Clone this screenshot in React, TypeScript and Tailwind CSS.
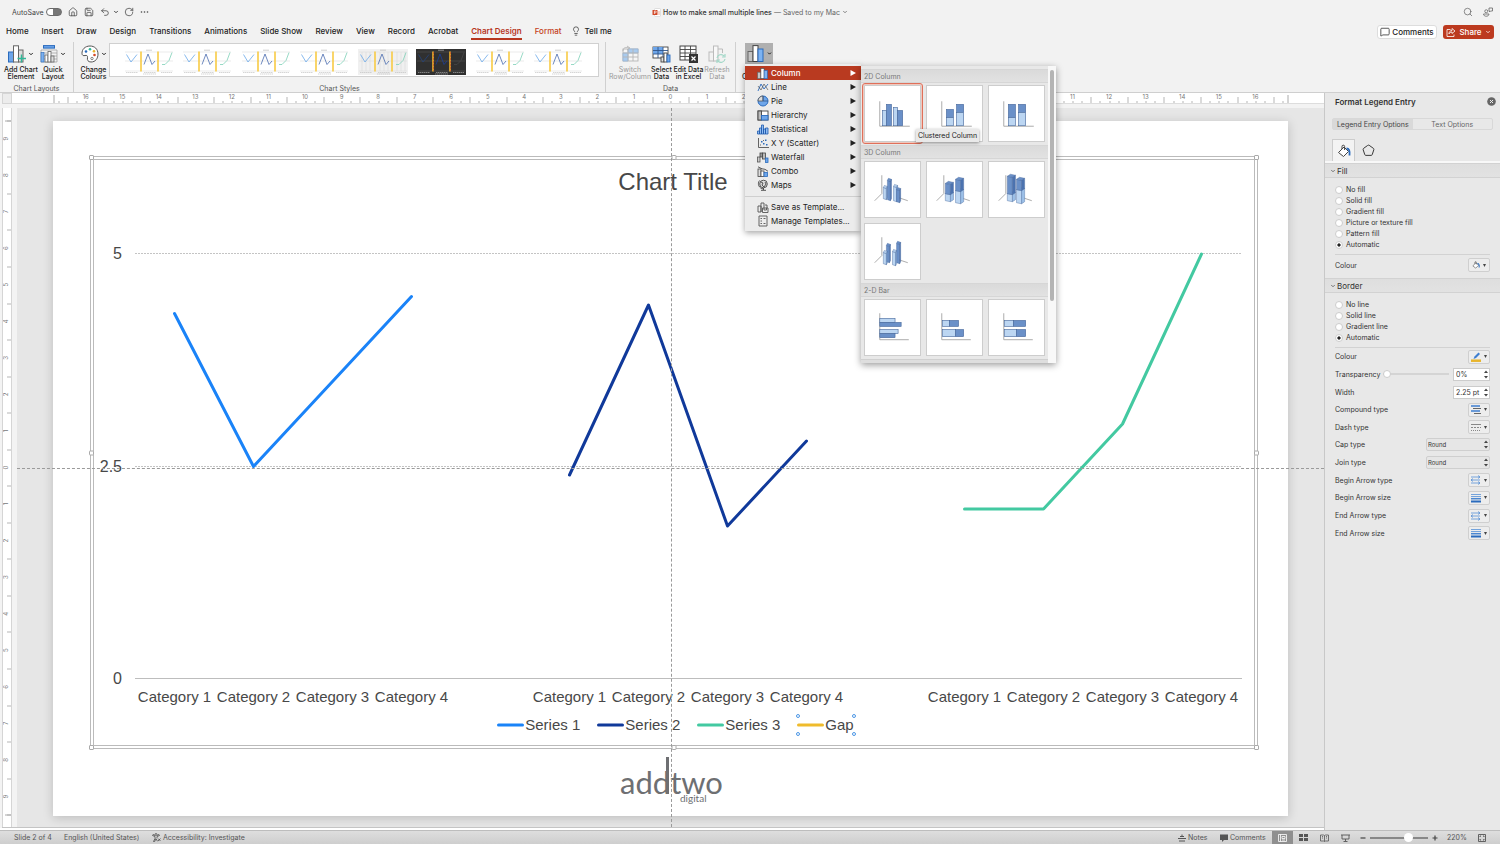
import type { ReactNode } from "react";
import {
  ChevronDown,
  Home,
  Lightbulb,
  MessageSquare,
  Pentagon,
  Save,
  Search,
  Undo2,
  RotateCw,
} from "lucide-react";

const BLUE = "#6a90c8";
const PALE = "#bcd6f2";

const SERIES = [
  { name: "Series 1", color: "#1a83f8", start: 0, values: [4.3, 2.5, 3.5, 4.5] },
  { name: "Series 2", color: "#10399a", start: 5, values: [2.4, 4.4, 1.8, 2.8] },
  { name: "Series 3", color: "#43c9a1", start: 10, values: [2, 2, 3, 5] },
];

const TABS = [
  "Home",
  "Insert",
  "Draw",
  "Design",
  "Transitions",
  "Animations",
  "Slide Show",
  "Review",
  "View",
  "Record",
  "Acrobat",
];

/* ---------- title bar and tabs ---------- */

const TitleBar = () => (
  <div className="grid h-6 shrink-0 grid-cols-[1fr_auto_1fr] items-center text-[7px] text-[#444]">
    <div className="flex items-center pl-3">
      <label htmlFor="autosave" className="w-[34px]">
        AutoSave
      </label>
      <input
        id="autosave"
        type="checkbox"
        role="switch"
        className="h-2 w-[16px] appearance-none rounded-full border border-[#6b6b6b] bg-[linear-gradient(90deg,#fff_45%,#777_45%)]"
      />
      <button aria-label="Home" className="ml-[6px]">
        <Home size={10} strokeWidth={1.8} />
      </button>
      <button aria-label="Save" className="ml-[6px]">
        <Save size={10} strokeWidth={1.8} />
      </button>
      <button aria-label="Undo" className="ml-[6px]">
        <Undo2 size={10} strokeWidth={1.8} />
      </button>
      <button aria-label="Undo list" className="ml-[3px]">
        <ChevronDown size={6} strokeWidth={4} />
      </button>
      <button aria-label="Redo" className="ml-[5px]">
        <RotateCw size={10} strokeWidth={1.8} />
      </button>
      <button aria-label="More" className="ml-[6px]">
        <svg width="9" height="4" viewBox="0 0 9 4" fill="#444">
          <circle cx="1.5" cy="2" r="0.8" />
          <circle cx="4.5" cy="2" r="0.8" />
          <circle cx="7.5" cy="2" r="0.8" />
        </svg>
      </button>
    </div>
    <button className="flex items-center gap-[2px]">
      <svg width="9" height="9" viewBox="0 0 9 9">
        <rect x="2.5" y="0.5" width="6" height="8" rx="1" fill="#fff" stroke="#ccc" strokeWidth=".6" />
        <rect x="0.5" y="2" width="5" height="5" rx=".6" fill="#d24726" />
        <path d="M2.4 6V3h1a.9.9 0 0 1 0 1.8h-1" fill="none" stroke="#fff" strokeWidth=".7" />
        <path d="M6 4h2M6 6h2" stroke="#e78a70" strokeWidth=".7" />
      </svg>
      <span className="font-medium text-[#333]">How to make small multiple lines</span>
      <span className="text-[#666]">— Saved to my Mac</span>
      <ChevronDown size={6} strokeWidth={2.5} />
    </button>
    <div className="flex items-center justify-end gap-[10px] pr-[7px] text-[#666]">
      <button aria-label="Search">
        <Search size={10} strokeWidth={1.8} />
      </button>
      <button aria-label="Presence">
        <svg width="10" height="10" viewBox="0 0 20 20" fill="none" stroke="#666" strokeWidth="1.6">
          <circle cx="6.5" cy="8.5" r="3" />
          <path d="M1 14h11c0 6-11 6-11 0zM12 2h7v6h-4l-2 2V8h-1z" />
        </svg>
      </button>
    </div>
  </div>
);

const TabRow = () => (
  <div className="flex h-[18px] shrink-0 items-start justify-between text-[8px] font-medium text-[#222]">
    <nav className="flex h-[14px] items-center gap-[13px] pl-[6px]">
      {TABS.map((tab) => (
        <a key={tab} href="#">
          {tab}
        </a>
      ))}
      <a href="#" className="relative font-semibold text-[#b7361e]">
        Chart Design
        <span className="absolute inset-x-0 top-[11px] h-[2px] bg-[#b7361e]" />
      </a>
      <a href="#" className="text-[#c43e1c]">
        Format
      </a>
      <a href="#" className="-ml-1 flex items-center gap-[4px]">
        <Lightbulb size={10} strokeWidth={1.6} />
        Tell me
      </a>
    </nav>
    <div className="flex items-center gap-[6px] pr-[6px] pt-[1px]">
      <button className="flex h-[14px] w-[60px] items-center justify-center gap-[2px] rounded-[3px] border border-[#ddd] bg-white">
        <MessageSquare size={10} strokeWidth={1.8} />
        Comments
      </button>
      <button className="flex h-[14px] w-[51px] items-center justify-center gap-[3px] rounded-[3px] bg-[#bc3a1f] text-white">
        <svg width="10" height="9" viewBox="0 0 20 18" fill="none" stroke="currentColor" strokeWidth="1.6">
          <path d="M9 3H2v14h14v-4M12 5V1l6 5-6 5V8c-4 0-5 2-6 4 0-4 2-7 6-7z" />
        </svg>
        Share
        <ChevronDown size={6} strokeWidth={3} />
      </button>
    </div>
  </div>
);

/* ---------- ribbon ---------- */

const AddElementIcon = () => (
  <svg width="18" height="18" viewBox="0 0 18 18" strokeWidth="1">
    <rect x="0.5" y="7" width="5" height="10" fill="#6ea6ea" stroke="#2a6bbd" />
    <rect x="5.5" y="0.8" width="5" height="16.2" fill="#fff" stroke="#666" />
    <rect x="10.5" y="5" width="4.500" height="12" fill="#ddd" stroke="#666" />
    <path d="M13.500 9.500v8M9.500 13.500h8.500" stroke="#2fb898" strokeWidth="1.400" />
  </svg>
);

const QuickLayoutIcon = () => (
  <svg width="18" height="18" viewBox="0 0 18 18" strokeWidth="1" fill="none">
    <rect x="3.500" y="0.600" width="11" height="2.500" fill="#6ea6ea" stroke="#2a6bbd" />
    <path d="M1 5h16M1 8h16M1 11h16M1 14h16M1 17h16M1 5v12M17 5v12" stroke="#999" strokeWidth=".7" />
    <rect x="1" y="7.500" width="3" height="9.500" fill="#7db0ee" stroke="#2a6bbd" strokeWidth=".6" />
    <rect x="5" y="10" width="3" height="7" fill="#fff" stroke="#666" strokeWidth=".8" />
    <rect x="8" y="6.500" width="3" height="10.500" fill="#fff" stroke="#666" strokeWidth=".8" />
    <rect x="11" y="11" width="3" height="6" fill="#ddd" stroke="#666" strokeWidth=".8" />
  </svg>
);

const PaletteIcon = () => (
  <svg width="18" height="18" viewBox="0 0 18 18">
    <path
      d="M9 1C4 1 .8 4.500 1 8.500c.1 2 1.500 2.500 3 2 1.800-.5 3 .5 2.500 2.300C6 15 7 17 10 17c4.500 0 7-3.500 7-8 0-5-3.500-8-8-8z"
      fill="#fff"
      stroke="#555"
    />
    <circle cx="5" cy="6.500" r="1.300" fill="#2a6bbd" />
    <circle cx="9" cy="4.200" r="1.300" fill="#2fb898" />
    <circle cx="13" cy="6.200" r="1.300" fill="#e8b32c" />
    <circle cx="13.500" cy="10" r="1.300" fill="#d24726" />
    <circle cx="11" cy="13.500" r="1.200" fill="#fff" stroke="#555" strokeWidth=".7" />
  </svg>
);

const SwitchIcon = () => (
  <svg width="18" height="18" viewBox="0 0 18 18" fill="none" stroke="#b5b5b5" strokeWidth=".9">
    <rect x="2" y="4" width="15" height="12" fill="#f6f6f6" />
    <path d="M7 4h10v4H7zM2 8h5v8H2z" fill="#a9cbee" stroke="#9bb8d8" />
    <path d="M2 8h15M2 12h15M7 4v12M12 4v12" />
    <path d="M2 6c0-4 4-4 6-3M6 1l3 2-3 2" />
  </svg>
);

const SelectDataIcon = () => (
  <svg width="19" height="18" viewBox="0 0 19 18" strokeWidth=".9">
    <rect x="1" y="2" width="15" height="11" fill="#fff" stroke="#444" />
    <path d="M1 2h10v7H1z" fill="#6ea6ea" />
    <path d="M1 5.500h15M1 9h15M6 2v11M11 2v11" stroke="#30558a" />
    <rect x="9" y="12" width="3" height="5" fill="#ddd" stroke="#444" />
    <rect x="12" y="8" width="3" height="9" fill="#fff" stroke="#444" />
    <rect x="15" y="10" width="3" height="7" fill="#6ea6ea" stroke="#2a6bbd" />
  </svg>
);

const EditDataIcon = () => (
  <svg width="19" height="18" viewBox="0 0 19 18">
    <rect x="1" y="1" width="16" height="14" fill="#fff" stroke="#444" />
    <path d="M1 4.500h16M1 8h16M1 11.500h16M6 1v14M11.500 1v14" stroke="#444" strokeWidth=".9" />
    <rect x="10" y="9" width="9" height="9" fill="#333" />
    <path d="M12.500 11.500l4 4M16.500 11.500l-4 4" stroke="#fff" strokeWidth="1.200" />
  </svg>
);

const RefreshIcon = () => (
  <svg width="18" height="18" viewBox="0 0 18 18" fill="none" stroke="#bbb">
    <rect x="1" y="7" width="4.500" height="9" />
    <rect x="5.500" y="1" width="4.500" height="15" fill="#f8f8f8" />
    <path d="M10 4h4.500v4" />
    <path d="M9 13a4 4 0 0 1 7-2M17 9v3h-3M17 14a4 4 0 0 1-7 2M9 18v-3h3" stroke="#a3d8c8" strokeWidth="1.200" />
  </svg>
);

const ColumnsIcon = ({ size = 17 }: { size?: number }) => (
  <svg width={size} height={size} viewBox="0 0 17 17">
    <rect x="1" y="6.500" width="5" height="10" fill="#c4c4c4" stroke="#666" />
    <rect x="6" y="0.600" width="5" height="15.900" fill="#fff" stroke="#444" />
    <rect x="11" y="4" width="5" height="12.500" fill="#7db3f2" stroke="#2a6bbd" />
  </svg>
);

type ToolProps = {
  icon: ReactNode;
  lines: [string, string];
  arrow?: boolean;
  muted?: boolean;
  className: string;
};

const Tool = ({ icon, lines, arrow, muted, className }: ToolProps) => (
  <button
    className={`${className} flex shrink-0 flex-col items-center pt-[2px] text-[7px] leading-[7px] ${
      muted ? "text-[#999]" : "font-medium text-[#222]"
    }`}
  >
    <span className="flex h-[20px] items-center gap-[2px]">
      {icon}
      {arrow && <ChevronDown size={6} strokeWidth={4} />}
    </span>
    <span className="mt-[2px] whitespace-nowrap">
      {lines[0]}
      <br />
      {lines[1]}
    </span>
  </button>
);

const Group = ({ label, className, children }: { label: string; className: string; children: ReactNode }) => (
  <section className={`${className} flex shrink-0 flex-col justify-between border-r border-[#d0d0d0]`}>
    <div className="flex">{children}</div>
    <h2 className="text-center text-[7px] leading-[7px] text-[#555]">{label}</h2>
  </section>
);

const THUMBS = ["white", "white", "white", "white", "shaded", "dark", "white", "white"];

const StyleThumb = ({ kind, index }: { kind: string; index: number }) => {
  const dark = kind === "dark";
  const bg = dark ? "#303030" : kind === "shaded" ? "#f0f0f0" : "#fff";
  return (
    <button aria-label={`Chart style ${index + 1}`} className="shrink-0">
      <svg width="50" height="26" viewBox="0 0 50 26" fill="none" strokeWidth=".8">
        <rect width="50" height="26" fill={bg} />
        <path d="M1 3h48M1 12h48M1 22h48" stroke={dark ? "#555" : "#ddd"} strokeWidth=".6" />
        {kind === "shaded" && (
          <path d="M4 3v19M8 3v19M12 3v19M22 3v19M26 3v19M30 3v19M39 3v19M43 3v19M47 3v19" stroke="#d5d5d5" strokeWidth=".5" />
        )}
        <path d="M22 1.200h6" stroke="#bbb" strokeWidth=".7" />
        <path d="M2 23.500h12M20 23.500h12M37 23.500h11M19 25h13" stroke="#bbb" strokeWidth=".6" strokeDasharray="1.500 .5" />
        <path d="M17 2.500v20M34 2.500v20" stroke={dark ? "#f0b42a" : "#f8cb45"} strokeWidth="1.600" />
        {dark && <path d="M17.500 3v19M34.500 3v19" stroke="#c9432a" strokeWidth=".6" strokeDasharray="2 1" />}
        <path d="M2.500 5.500L7 13l6-7.500" stroke={dark ? "#24447c" : "#69a8ea"} />
        <path d="M20 15.500L24 5l4 10.500 3-3.500" stroke={dark ? "#1c3f9a" : "#4a6cb0"} />
        <path d="M38 15.500h3l4-4 3-8" stroke={dark ? "#474747" : "#7dd0b8"} />
      </svg>
    </button>
  );
};

const Ribbon = () => (
  <div className="relative z-20 flex h-[51px] shrink-0 border-b border-[#cfcfcf]">
    <Group label="Chart Layouts" className="w-[74px]">
      <Tool className="ml-[2px] w-[38px]" icon={<AddElementIcon />} lines={["Add Chart", "Element"]} arrow />
      <Tool className="w-[26px]" icon={<QuickLayoutIcon />} lines={["Quick", "Layout"]} arrow />
    </Group>
    <Group label="Chart Styles" className="w-[532px]">
      <Tool className="w-[35px] pl-1" icon={<PaletteIcon />} lines={["Change", "Colours"]} arrow />
      <div className="mt-[1px] flex h-[34px] w-[490px] justify-between border border-[#d0d0d0] bg-white pl-[14px] pr-[15px] pt-[3px]">
        {THUMBS.map((kind, i) => (
          <StyleThumb key={i} kind={kind} index={i} />
        ))}
      </div>
    </Group>
    <Group label="Data" className="w-[130px]">
      <Tool className="ml-[4px] w-[40px]" icon={<SwitchIcon />} lines={["Switch", "Row/Column"]} muted />
      <Tool className="w-[23px]" icon={<SelectDataIcon />} lines={["Select", "Data"]} />
      <Tool className="w-[31px]" icon={<EditDataIcon />} lines={["Edit Data", "in Excel"]} />
      <Tool className="w-[26px]" icon={<RefreshIcon />} lines={["Refresh", "Data"]} muted />
    </Group>
    <div className="relative ml-[6px] w-[36px]">
      <button className="ml-[3px] mt-[1px] flex h-[21px] w-[28px] items-center justify-center gap-[3px] bg-[#b0b0b0]">
        <ColumnsIcon />
        <ChevronDown size={5} strokeWidth={4} />
      </button>
      <span className="mt-[2px] block whitespace-nowrap text-center text-[7px] font-medium leading-[7px] text-[#222]">
        Change
        <br />
        Chart Type
      </span>
      <ChartTypeMenu />
    </div>
  </div>
);

/* ---------- chart type menu ---------- */

const MENU: { label: string; icon: ReactNode }[] = [
  { label: "Column", icon: <ColumnsIcon size={11} /> },
  {
    label: "Line",
    icon: (
      <svg width="12" height="11" viewBox="0 0 12 11" fill="none">
        <path d="M1 9l3-7 3 5 4-5" stroke="#2a6bbd" strokeWidth=".9" />
        <path d="M1 4l3 4 3-6 4 6" stroke="#555" strokeWidth=".7" />
      </svg>
    ),
  },
  {
    label: "Pie",
    icon: (
      <svg width="12" height="12" viewBox="0 0 12 12">
        <circle cx="6" cy="6" r="5" fill="#6ea6ea" stroke="#2a6bbd" />
        <path d="M6 6V1a5 5 0 0 0-5 5z" fill="#ddd" stroke="#555" strokeWidth=".8" />
        <path d="M6 1v5h5" fill="none" stroke="#30558a" strokeWidth=".8" />
      </svg>
    ),
  },
  {
    label: "Hierarchy",
    icon: (
      <svg width="12" height="11" viewBox="0 0 12 11" strokeWidth=".9">
        <rect x="1" y="1" width="10" height="9" fill="#fff" stroke="#444" />
        <rect x="1" y="1" width="3.500" height="9" fill="#bbb" stroke="#444" />
        <rect x="4.500" y="5.500" width="6.500" height="4.500" fill="#6ea6ea" stroke="#2a6bbd" />
      </svg>
    ),
  },
  {
    label: "Statistical",
    icon: (
      <svg width="12" height="11" viewBox="0 0 12 11" fill="#8fbcf2" stroke="#1f5cae" strokeWidth=".8">
        <path d="M.5 10V7h2v3zM2.500 10V4h2v6zM4.500 10V1h2v9zM6.500 10V5h2v5zM8.500 10V4h2.500v6z" />
      </svg>
    ),
  },
  {
    label: "X Y (Scatter)",
    icon: (
      <svg width="12" height="11" viewBox="0 0 12 11">
        <path d="M1.500 0v9.500H12" fill="none" stroke="#555" strokeWidth=".9" />
        <path d="M4 3h1.500v1.500H4zM8 1.500h1.500V3H8zM6 5h1.500v1.500H6zM9 6h1.500v1.500H9z" fill="#2a6bbd" />
        <path d="M3 6.500h1v1H3zM6 2h1v1H6z" fill="#666" />
      </svg>
    ),
  },
  {
    label: "Waterfall",
    icon: (
      <svg width="12" height="11" viewBox="0 0 12 11" strokeWidth=".8">
        <rect x=".5" y="5" width="2.500" height="5" fill="#ccc" stroke="#555" />
        <rect x="3" y="1" width="2.500" height="4" fill="#999" stroke="#444" />
        <rect x="5.500" y="1" width="3" height="6" fill="#bbb" stroke="#444" />
        <rect x="8.500" y="6" width="2.500" height="4.500" fill="#6ea6ea" stroke="#2a6bbd" />
      </svg>
    ),
  },
  {
    label: "Combo",
    icon: (
      <svg width="12" height="11" viewBox="0 0 12 11" strokeWidth=".8">
        <rect x="1" y="3" width="3" height="7.500" fill="#ddd" stroke="#444" />
        <rect x="4" y="5" width="3" height="5.500" fill="#fff" stroke="#444" />
        <rect x="7" y="6.500" width="3.500" height="4" fill="#6ea6ea" stroke="#2a6bbd" />
        <path d="M1 .8l4 2 3 .5 3 2" fill="none" stroke="#333" />
      </svg>
    ),
  },
  {
    label: "Maps",
    icon: (
      <svg width="12" height="12" viewBox="0 0 12 12" fill="none" stroke="#444" strokeWidth=".9">
        <circle cx="6.500" cy="5" r="3.800" fill="#ddd" />
        <path d="M4 3l2 1-1 2 2 2 2-3-1-2M2.500 1.500C0 5 2 9.500 6.500 10M6.500 9v2M4 11.300h5" />
      </svg>
    ),
  },
];

const ChartTypeMenu = () => (
  <div className="absolute left-[3px] top-[22px] flex items-start text-[8px] text-[#222]">
    <div role="menu" className="w-[116px] bg-[#ececec] pb-[3px] pt-[2px] shadow-[0_2px_6px_rgba(0,0,0,0.35)]">
      {MENU.map(({ label, icon }, i) => (
        <button
          key={label}
          role="menuitem"
          className={`flex h-[14px] w-full items-center pl-[12px] pr-[5px] ${
            i === 0 ? "bg-[#b93a20] font-medium text-white" : ""
          }`}
        >
          <span className="flex w-[14px] items-center">{icon}</span>
          {label}
          <svg className="ml-auto" width="6" height="6" viewBox="0 0 6 6" fill="currentColor">
            <path d="M.5 0l5.500 3-5.500 3z" />
          </svg>
        </button>
      ))}
      <hr className="mb-[3px] mt-[4px] border-[#cfcfcf]" />
      <button role="menuitem" className="flex h-[14px] w-full items-center pl-[12px]">
        <span className="w-[14px]">
          <svg width="12" height="11" viewBox="0 0 12 11" fill="none" stroke="#555" strokeWidth=".9">
            <path d="M1 10V4h3v6zM4 10V1h3v5M5.500 6h5.500v4.500H5.500zM7 6v2h2.500V6M8 3h2v3" />
          </svg>
        </span>
        Save as Template...
      </button>
      <button role="menuitem" className="flex h-[14px] w-full items-center pl-[12px]">
        <span className="w-[14px]">
          <svg width="12" height="12" viewBox="0 0 12 12" fill="none" stroke="#555" strokeWidth=".9">
            <path d="M2 1h8v10H2zM3.500 3.500h1.500M3.500 6h1.500M3.500 8.500h1.500M6.500 3.500h2M6.500 8.500h2" />
          </svg>
        </span>
        Manage Templates...
      </button>
    </div>
    <ColumnGallery />
  </div>
);

type Bar = [x: number, y: number, w: number, h: number, color: string];

const FlatChart = ({ bars, wide }: { bars: Bar[]; wide?: boolean }) => (
  <svg viewBox="0 0 56 56" className="h-full w-full">
    <path d={wide ? "M15.500 14v26H44" : "M15.500 16v24.500H45"} fill="none" stroke="#999" strokeWidth=".8" />
    {bars.map(([x, y, w, h, color], i) => (
      <rect key={i} x={x} y={y} width={w} height={h} fill={color} stroke="#48699c" strokeWidth=".6" />
    ))}
  </svg>
);

const DeepChart = ({ bars }: { bars: Bar[] }) => (
  <svg viewBox="0 0 56 56" className="h-full w-full">
    <path d="M17.500 14v18l-7 7M34 36l9 3" fill="none" stroke="#999" strokeWidth=".8" />
    {bars.map(([x, y, w, h, color], i) => {
      const d = w > 5 ? 3 : 1;
      const f = w - d;
      return (
        <g key={i} stroke="#48699c" strokeWidth=".4" strokeLinejoin="round">
          <path d={`M${x} ${y}v${h}l${f} 1v${-h}z`} fill={color} />
          <path d={`M${x} ${y}l${d} -2l${f} 1l${-d} 2z`} fill={color} />
          <path d={`M${x + f} ${y + 1}l${d} -2v${h}l${-d} 2z`} fill={color === BLUE ? "#4c73b0" : "#9cc0e8"} />
        </g>
      );
    })}
  </svg>
);

const GALLERY: { title: string; tiles: { name: string; art: ReactNode }[] }[] = [
  {
    title: "2D Column",
    tiles: [
      {
        name: "Clustered Column",
        art: (
          <FlatChart
            bars={[
              [18, 25, 4, 15, PALE],
              [22, 19, 5, 21, BLUE],
              [29, 22, 4, 18, PALE],
              [33, 25, 5, 15, BLUE],
            ]}
          />
        ),
      },
      {
        name: "Stacked Column",
        art: (
          <FlatChart
            bars={[
              [20, 24, 7, 8, BLUE],
              [20, 32, 7, 8, PALE],
              [30, 19, 7, 8, BLUE],
              [30, 27, 7, 13, PALE],
            ]}
          />
        ),
      },
      {
        name: "100% Stacked Column",
        art: (
          <FlatChart
            bars={[
              [20, 19, 7, 13, BLUE],
              [20, 32, 7, 8, PALE],
              [30, 19, 7, 8, BLUE],
              [30, 27, 7, 13, PALE],
            ]}
          />
        ),
      },
    ],
  },
  {
    title: "3D Column",
    tiles: [
      {
        name: "3D Clustered Column",
        art: (
          <DeepChart
            bars={[
              [19, 26, 4, 11, PALE],
              [23, 19, 4, 19, BLUE],
              [29, 25, 4, 14, PALE],
              [32, 28, 4, 12, BLUE],
            ]}
          />
        ),
      },
      {
        name: "3D Stacked Column",
        art: (
          <DeepChart
            bars={[
              [19, 32, 8, 7, PALE],
              [19, 22, 8, 10, BLUE],
              [29, 29, 8, 12, PALE],
              [29, 18, 8, 11, BLUE],
            ]}
          />
        ),
      },
      {
        name: "3D 100% Stacked Column",
        art: (
          <DeepChart
            bars={[
              [19, 32, 8, 7, PALE],
              [19, 15, 8, 17, BLUE],
              [28, 28, 8, 13, PALE],
              [28, 18, 8, 10, BLUE],
            ]}
          />
        ),
      },
      {
        name: "3D Column",
        art: (
          <DeepChart
            bars={[
              [22, 22, 4, 16, BLUE],
              [19, 29, 4, 11, PALE],
              [32, 20, 4, 19, BLUE],
              [28, 28, 4, 13, PALE],
            ]}
          />
        ),
      },
    ],
  },
  {
    title: "2-D Bar",
    tiles: [
      {
        name: "Clustered Bar",
        art: (
          <FlatChart
            wide
            bars={[
              [15.5, 19, 15, 4, PALE],
              [15.5, 23, 21, 4, BLUE],
              [15.5, 30, 18, 4, PALE],
              [15.5, 34, 15, 4, BLUE],
            ]}
          />
        ),
      },
      {
        name: "Stacked Bar",
        art: (
          <FlatChart
            wide
            bars={[
              [16, 21, 7, 6, PALE],
              [23, 21, 9, 6, BLUE],
              [16, 30, 13, 7, PALE],
              [29, 30, 8, 7, BLUE],
            ]}
          />
        ),
      },
      {
        name: "100% Stacked Bar",
        art: (
          <FlatChart
            wide
            bars={[
              [16, 21, 9, 6, PALE],
              [25, 21, 12, 6, BLUE],
              [16, 30, 12, 7, PALE],
              [28, 30, 9, 7, BLUE],
            ]}
          />
        ),
      },
    ],
  },
];

const ColumnGallery = () => (
  <div className="mt-[2px] flex w-[195px] bg-[#e8e8e8] shadow-[0_2px_7px_rgba(0,0,0,0.4)]">
    <div className="w-[187px] pt-[3px]">
      {GALLERY.map(({ title, tiles }) => (
        <section key={title}>
          <h3 className="h-[14px] border-y border-[#d6d6d6] bg-gradient-to-b from-[#dadada] to-[#e2e2e2] pl-[3px] text-[7px] leading-[13px] text-[#777]">
            {title}
          </h3>
          <div className="grid grid-cols-[repeat(3,57px)] gap-x-[5px] gap-y-[5px] px-[3px] pb-[3px] pt-[2px]">
            {tiles.map(({ name, art }) => (
              <button
                key={name}
                aria-label={name}
                className={`relative h-[57px] border border-[#cdcdcd] bg-white ${
                  name === "Clustered Column"
                    ? "rounded-[1px] shadow-[0_0_0_1px_#f0c8be] outline-1 outline-offset-1 outline-[#e0705a]"
                    : ""
                }`}
              >
                <span className="absolute -inset-px">{art}</span>
                {name === "Clustered Column" && (
                  <span
                    role="tooltip"
                    className="absolute left-[51px] top-[43px] z-10 flex h-[13px] w-[63px] items-center justify-center whitespace-nowrap bg-[#e9e9e9] text-[7px] shadow-[0_1px_3px_rgba(0,0,0,0.4)]"
                  >
                    {name}
                  </span>
                )}
              </button>
            ))}
          </div>
        </section>
      ))}
      <div className="h-1 border-t border-[#d0d0d0] bg-[#dedede]" />
    </div>
    <div className="flex-1 bg-[#f8f8f8] pl-[2px] pt-[4px]">
      <div className="h-[231px] w-[4px] rounded-full bg-[#b4b4b4]" />
    </div>
  </div>
);

/* ---------- rulers, slide and chart ---------- */

// one ruler unit in pixels
const UNIT = 36.55;

const Ruler = ({ vertical, reach, edge }: { vertical?: boolean; reach: number; edge: number }) => {
  const marks: number[] = [];
  for (let q = -Math.floor(reach * 4); q <= reach * 4; q++) marks.push(q / 4);
  return (
    <svg className="h-full w-full bg-white" fontSize="6" fill="#777" textAnchor="middle">
      <svg x={vertical ? "0" : "50%"} y={vertical ? "50%" : "0"} overflow="visible">
        {marks.map((m) => {
          const p = Math.round(m * UNIT);
          const half = Math.abs(m % 1) === 0.5;
          const from = half ? 4 : 8;
          return vertical ? (
            <path key={m} d={`M${from} ${p + 0.5}H10`} stroke="#b5b5b5" />
          ) : (
            <path key={m} d={`M${p + 0.5} ${from}V10`} stroke="#b5b5b5" />
          );
        })}
        {marks
          .filter((m) => Number.isInteger(m))
          .map((m) => {
            const p = m * UNIT;
            return vertical ? (
              <text key={m} transform={`translate(5 ${p}) rotate(-90)`}>
                {Math.abs(m)}
              </text>
            ) : (
              <text key={m} x={p} y="6">
                {Math.abs(m)}
              </text>
            );
          })}
        {[-edge, edge].map((e) => (
          <path key={e} d={vertical ? `M2 ${e + 0.5}H10` : `M${e + 0.5} 2V11`} stroke="#aaa" />
        ))}
      </svg>
    </svg>
  );
};

const plotX = (i: number) => 45 + 79 * (i + 0.5);
const plotY = (value: number) => 523 - value * 85;

const Plot = () => (
  <svg viewBox="0 0 1168 559" className="block w-full" fill="#484848" fontSize="15">
    <text x="583" y="34" fontSize="24" textAnchor="middle">
      Chart Title
    </text>
    {[5, 2.5, 0].map((tick) => (
      <g key={tick}>
        <path
          d={`M45 ${Math.round(plotY(tick)) - 0.5}H1152`}
          stroke={tick ? "#c4c4c4" : "#bdbdbd"}
          strokeDasharray={tick ? "2 1" : undefined}
        />
        <text x="32" y={plotY(tick) + 5} fontSize="16" textAnchor="end">
          {tick}
        </text>
      </g>
    ))}
    {SERIES.map(({ name, color, start, values }) => (
      <g key={name}>
        <polyline
          points={values.map((v, i) => `${plotX(start + i)},${plotY(v)}`).join(" ")}
          fill="none"
          stroke={color}
          strokeWidth="3"
          strokeLinecap="round"
          strokeLinejoin="round"
        />
        {values.map((_, i) => (
          <text key={i} x={plotX(start + i)} y="546" textAnchor="middle">
            {`Category ${i + 1}`}
          </text>
        ))}
      </g>
    ))}
  </svg>
);

const HANDLES = [
  "-left-[5px] -top-[5px]",
  "left-1/2 -top-[5px] -translate-x-1/2",
  "-right-[5px] -top-[5px]",
  "-left-[5px] top-1/2 -translate-y-1/2",
  "-right-[5px] top-1/2 -translate-y-1/2",
  "-bottom-[5px] -left-[5px]",
  "-bottom-[5px] left-1/2 -translate-x-1/2",
  "-bottom-[5px] -right-[5px]",
];

const DOTS = ["-left-[1px] -top-[1px]", "-right-[2px] -top-[1px]", "-bottom-[1px] -left-[1px]", "-bottom-[1px] -right-[2px]"];

const Slide = () => (
  <div className="flex aspect-video w-full flex-col bg-white pl-[37px] pr-[30px] pt-[35px] font-['Liberation_Sans',Arial,sans-serif] shadow-[0_2px_10px_rgba(0,0,0,0.18)]">
    <div className="relative border-4 border-double border-[#bbb] pb-[10px]">
      <div className="-mx-1 -mt-1">
        <Plot />
      </div>
      <div className="flex justify-center gap-[17px] pl-[3px] text-[15px] leading-[20px] text-[#484848]">
        {[...SERIES, { name: "Gap", color: "#efbb2c" }].map(({ name, color }) => (
          <span key={name} className="relative flex items-center gap-px">
            <svg width="27" height="4" viewBox="0 0 27 4">
              <path d="M1.500 2h24" stroke={color} strokeWidth="3" strokeLinecap="round" />
            </svg>
            {name}
            {name === "Gap" &&
              DOTS.map((spot) => (
                <i key={spot} className={`absolute size-1 rounded-full border border-[#4b97e6] bg-white ${spot}`} />
              ))}
          </span>
        ))}
      </div>
      {HANDLES.map((spot) => (
        <i key={spot} className={`absolute size-[5px] rounded-[1px] border border-[#aaa] bg-white ${spot}`} />
      ))}
    </div>
    <svg
      className="ml-[521px] mt-[7px] shrink-0"
      width="120"
      height="54"
      viewBox="0 0 120 54"
      fill="#6e6f72"
      fontFamily="Lato, sans-serif"
    >
      <text x="9" y="38" fontSize="31">
        addtwo
      </text>
      <rect x="55" y="1" width="3" height="37" />
      <text x="69" y="46" fontSize="10">
        digital
      </text>
    </svg>
  </div>
);

const Workspace = () => (
  <div className="flex min-w-0 flex-1 flex-col border-b-2 border-white bg-[#f3f3f3] pl-[2px]">
    <div className="flex h-[15px] shrink-0">
      <div className="h-[11px] w-[10px] border border-[#d5d5d5] bg-[#ececec]" />
      <div className="h-[11px] flex-1 border-b border-[#ddd] bg-white pl-[5px]">
        <Ruler reach={16.75} edge={617} />
      </div>
    </div>
    <div className="flex min-h-0 flex-1 border-b border-[#c4c4c4]">
      <div className="mr-[5px] w-[10px] shrink-0 border-x border-[#d5d5d5]">
        <Ruler vertical reach={9.5} edge={347} />
      </div>
      <div className="relative flex min-w-0 flex-1 items-center overflow-hidden bg-[#e6e6e6] px-[36px] pt-[2px]">
        <Slide />
        <div className="absolute inset-y-0 left-1/2 border-l border-dashed border-[#9a9a9a]" />
        <div className="absolute inset-x-0 top-1/2 border-t border-dashed border-[#9a9a9a]" />
      </div>
    </div>
  </div>
);

/* ---------- format panel ---------- */

const RadioList = ({ name, options }: { name: string; options: string[] }) => (
  <fieldset aria-label={name} className="mx-[10px] border-b border-[#d2d2d2] pb-[4px] pt-[6px]">
    {options.map((option) => (
      <label key={option} className="flex h-[11px] items-center gap-[3px]">
        <input
          type="radio"
          name={name}
          defaultChecked={option === "Automatic"}
          className="size-2 appearance-none rounded-full border border-[#ccc] bg-white checked:bg-[radial-gradient(circle,#222_35%,#fff_40%)]"
        />
        {option}
      </label>
    ))}
  </fieldset>
);

const SectionHead = ({ children }: { children: string }) => (
  <button className="flex h-[15px] w-full items-center gap-[1px] border-y border-[#d2d2d2] bg-gradient-to-b from-[#dedede] to-[#e2e2e2] pl-[5px] text-[8px]">
    <ChevronDown size={6} strokeWidth={2.5} />
    {children}
  </button>
);

const DownMark = () => (
  <svg width="3" height="3" viewBox="0 0 4 4" fill="#444">
    <path d="M0 0h4L2 4z" />
  </svg>
);

const PickButton = ({ label, children }: { label: string; children: ReactNode }) => (
  <button
    aria-label={label}
    className="flex h-[14px] w-[22px] items-center justify-center gap-[3px] rounded-[2px] border border-[#cfcfcf] bg-[#ededed]"
  >
    {children}
    <DownMark />
  </button>
);

const Bucket = ({ size }: { size: number }) => (
  <svg width={size} height={size} viewBox="0 0 14 14" fill="none">
    <path d="M1.500 8.500L7 3l4.500 4.500-5 5z" fill="#fff" stroke="#444" />
    <path d="M5 5V2.500a1.300 1.300 0 0 1 2.600 0V6" stroke="#444" />
    <path d="M9.500 4.500c2.500 0 3.500 2 3 7" stroke="#2a6bbd" strokeWidth="1.800" />
  </svg>
);

const Lines = ({ kind }: { kind: "compound" | "dash" | "arrow" | "size" }) => (
  <svg width="10" height="10" viewBox="0 0 10 10" fill="none">
    {kind === "compound" && (
      <>
        <path d="M0 1h9M0 6h9" stroke="#3f7fd0" strokeWidth="1.300" />
        <path d="M2 3.500h8M3 8.500h7" stroke="#666" />
      </>
    )}
    {kind === "dash" && (
      <>
        <path d="M0 2.500h10" stroke="#888" />
        <path d="M0 5.500h10" stroke="#888" strokeDasharray="2 1" />
        <path d="M0 8.500h10" stroke="#888" strokeDasharray="1 1" />
      </>
    )}
    {kind === "arrow" && (
      <>
        <path d="M0 2h9M0 5h9M0 8h9" stroke="#74a3dc" />
        <path d="M7 .5L9 2 7 3.500M2 3.500L0 5l2 1.500M7 6.500L9 8 7 9.500" stroke="#4a86d0" strokeWidth=".7" />
      </>
    )}
    {kind === "size" && (
      <>
        <path d="M0 1.500h10M0 3.500h10" stroke="#74a3dc" />
        <path d="M0 5.700h10" stroke="#4a86d0" strokeWidth="1.500" />
        <path d="M0 8.500h10" stroke="#2a6bbd" strokeWidth="2" />
      </>
    )}
  </svg>
);

const Stepper = () => (
  <svg width="4" height="9" viewBox="0 0 4 9" fill="#444" className="pointer-events-none absolute right-[2px] top-[2px]">
    <path d="M0 3h4L2 .5zM0 6h4L2 8.500z" />
  </svg>
);

const NumberBox = ({ id, label, value }: { id: string; label?: string; value: string }) => (
  <span className="relative flex">
    <input
      id={id}
      type="text"
      aria-label={label}
      defaultValue={value}
      className="h-[13px] w-[37px] border border-[#ccc] bg-white pl-[2px] text-[7px]"
    />
    <Stepper />
  </span>
);

const RoundSelect = ({ id }: { id: string }) => (
  <span className="relative flex">
    <select
      id={id}
      className="h-[13px] w-[64px] appearance-none rounded-[2px] border border-[#cfcfcf] bg-[#e6e6e6] pl-[1px] text-[6px]"
    >
      <option>Round</option>
    </select>
    <Stepper />
  </span>
);

const Row = ({ label, htmlFor, children }: { label: string; htmlFor?: string; children: ReactNode }) => (
  <div className="flex items-center justify-between">
    {htmlFor ? <label htmlFor={htmlFor}>{label}</label> : <span>{label}</span>}
    {children}
  </div>
);

const FormatPanel = () => (
  <aside className="w-[176px] shrink-0 border-l border-[#c8c8c8] bg-[#e8e8e8] text-[7px] text-[#333]">
    <header className="flex h-[17px] items-center justify-between pl-[10px] pr-[4px]">
      <h2 className="text-[8px] font-semibold">Format Legend Entry</h2>
      <button aria-label="Close">
        <svg width="9" height="9" viewBox="0 0 9 9">
          <circle cx="4.500" cy="4.500" r="4.300" fill="#666" />
          <path d="M3 3l3 3M6 3L3 6" stroke="#eee" />
        </svg>
      </button>
    </header>
    <div className="mx-[7px] mt-[8px] grid h-[12px] grid-cols-2 rounded-[2px] border border-[#d8d8d8] text-[#666]">
      <button className="whitespace-nowrap bg-[#d9d9d9] text-[#444]">Legend Entry Options</button>
      <button>Text Options</button>
    </div>
    <div className="mt-[9px] flex items-end border-b-2 border-[#f8f8f8] pl-[7px]">
      <button
        aria-label="Fill and line"
        className="flex h-[22px] w-[23px] items-center justify-center border border-b-0 border-[#ccc] bg-[#f3f3f3]"
      >
        <Bucket size={14} />
      </button>
      <button aria-label="Effects" className="flex h-[22px] w-[26px] items-center justify-center">
        <Pentagon size={13} strokeWidth={1.8} />
      </button>
    </div>
    <SectionHead>Fill</SectionHead>
    <RadioList
      name="Fill"
      options={["No fill", "Solid fill", "Gradient fill", "Picture or texture fill", "Pattern fill", "Automatic"]}
    />
    <div className="mx-[10px] h-[23px] pt-[3px]">
      <Row label="Colour">
        <PickButton label="Fill colour">
          <Bucket size={8} />
        </PickButton>
      </Row>
    </div>
    <SectionHead>Border</SectionHead>
    <RadioList name="Border" options={["No line", "Solid line", "Gradient line", "Automatic"]} />
    <div className="mx-[10px] grid h-[194px] auto-rows-fr grid-cols-1">
      <Row label="Colour">
        <PickButton label="Border colour">
          <svg width="10" height="10" viewBox="0 0 10 10">
            <path d="M2.500 7l1-2.500L7.500 .5l1.500 1.500L5 6z" fill="#3f7fd0" />
            <path d="M0 8.700h10" stroke="#e8b52c" strokeWidth="2.500" />
          </svg>
        </PickButton>
      </Row>
      <div className="flex items-center">
        <label htmlFor="transparency" className="w-[48px] whitespace-nowrap">
          Transparency
        </label>
        <input
          id="transparency"
          type="range"
          defaultValue={0}
          className="h-[2px] min-w-0 flex-1 appearance-none bg-[#d4d4d4] [&::-webkit-slider-thumb]:size-2 [&::-webkit-slider-thumb]:appearance-none [&::-webkit-slider-thumb]:rounded-full [&::-webkit-slider-thumb]:border [&::-webkit-slider-thumb]:border-[#ccc] [&::-webkit-slider-thumb]:bg-white"
        />
        <span className="w-[4px]" />
        <NumberBox id="transparency-value" label="Transparency value" value="0%" />
      </div>
      <Row label="Width" htmlFor="width">
        <NumberBox id="width" value="2.25 pt" />
      </Row>
      <Row label="Compound type">
        <PickButton label="Compound type">
          <Lines kind="compound" />
        </PickButton>
      </Row>
      <Row label="Dash type">
        <PickButton label="Dash type">
          <Lines kind="dash" />
        </PickButton>
      </Row>
      <Row label="Cap type" htmlFor="cap">
        <RoundSelect id="cap" />
      </Row>
      <Row label="Join type" htmlFor="join">
        <RoundSelect id="join" />
      </Row>
      <Row label="Begin Arrow type">
        <PickButton label="Begin Arrow type">
          <Lines kind="arrow" />
        </PickButton>
      </Row>
      <Row label="Begin Arrow size">
        <PickButton label="Begin Arrow size">
          <Lines kind="size" />
        </PickButton>
      </Row>
      <Row label="End Arrow type">
        <PickButton label="End Arrow type">
          <Lines kind="arrow" />
        </PickButton>
      </Row>
      <Row label="End Arrow size">
        <PickButton label="End Arrow size">
          <Lines kind="size" />
        </PickButton>
      </Row>
    </div>
  </aside>
);

/* ---------- status bar ---------- */

const StatusBar = () => (
  <footer className="flex h-[14px] shrink-0 items-center justify-between border-t border-[#bdbdbd] bg-gradient-to-b from-[#dedede] to-[#cecece] text-[7px] text-[#555]">
    <div className="flex items-center pl-[14px]">
      <span className="w-[50px]">Slide 2 of 4</span>
      <button className="w-[88px] text-left">English (United States)</button>
      <button className="flex items-center gap-[2px]">
        <svg width="9" height="9" viewBox="0 0 18 18" fill="none" stroke="#444" strokeWidth="1.500">
          <circle cx="8" cy="3" r="2" />
          <path d="M1 5l5 2v4l-3 6 2 .5 3-6 3 5M15 5l-5 2v3M1 5l1-2 4 2M15 5l-1-2-4 2M12 11l5 5M17 11l-5 5" />
        </svg>
        Accessibility: Investigate
      </button>
    </div>
    <div className="flex items-center">
      <button className="flex w-[42px] items-center gap-[2px]">
        <svg width="8" height="8" viewBox="0 0 8 8" stroke="#555">
          <path d="M0 4.500h8M1 7h6M2 2.500h4M4 .5v2" />
        </svg>
        Notes
      </button>
      <button className="flex w-[52px] items-center gap-[2px]">
        <svg width="8" height="8" viewBox="0 0 8 8" fill="#555">
          <path d="M0 .5h8v5.500H4L2 8V6H0z" />
        </svg>
        Comments
      </button>
      <button aria-label="Normal" className="flex h-[13px] w-[21px] items-center justify-center bg-[#8f8f8f]">
        <svg width="9" height="8" viewBox="0 0 9 8" fill="none" stroke="#fff" strokeWidth=".8">
          <path d="M.5.5h8v7h-8zM2.500.5v7M4 2.500h3v2H4zM4 6h3" />
        </svg>
      </button>
      <button aria-label="Slide Sorter" className="flex w-[21px] justify-center">
        <svg width="9" height="7" viewBox="0 0 9 7" fill="#555">
          <path d="M0 0h4v3H0zM5 0h4v3H5zM0 4h4v3H0zM5 4h4v3H5z" />
        </svg>
      </button>
      <button aria-label="Reading View" className="flex w-[21px] justify-center">
        <svg width="9" height="8" viewBox="0 0 9 8" fill="none" stroke="#555" strokeWidth=".8">
          <path d="M.5 1h3l1 .6 1-.6h3v6h-3l-1 .6-1-.6h-3zM4.500 1.500v6M2 2.500h1M2 4h1M6 2.500h1M6 4h1" />
        </svg>
      </button>
      <button aria-label="Slide Show" className="flex w-[21px] justify-center">
        <svg width="9" height="8" viewBox="0 0 9 8" fill="none" stroke="#555" strokeWidth=".9">
          <path d="M0 1h9M1 1v4h7V1M4.500 5v2M2.500 7.500h4" />
        </svg>
      </button>
      <button aria-label="Zoom out" className="flex w-[14px] justify-center">
        <svg width="6" height="6" viewBox="0 0 6 6" stroke="#444" strokeWidth="1.200">
          <path d="M.5 3h5" />
        </svg>
      </button>
      <input
        type="range"
        aria-label="Zoom"
        defaultValue={70}
        className="h-[2px] w-[58px] appearance-none bg-[#888] [&::-webkit-slider-thumb]:size-[9px] [&::-webkit-slider-thumb]:appearance-none [&::-webkit-slider-thumb]:rounded-full [&::-webkit-slider-thumb]:bg-white"
      />
      <button aria-label="Zoom in" className="flex w-[14px] justify-center">
        <svg width="6" height="6" viewBox="0 0 6 6" stroke="#444" strokeWidth="1.200">
          <path d="M.5 3h5M3 .5v5" />
        </svg>
      </button>
      <span className="w-[36px] pl-[5px]">220%</span>
      <button aria-label="Fit to window" className="mr-[14px]">
        <svg width="8" height="8" viewBox="0 0 8 8" fill="none" stroke="#555" strokeWidth=".9">
          <path d="M.5.5h7v7h-7zM2 3V2h1M5 2h1v1M6 5v1H5M3 6H2V5" />
        </svg>
      </button>
    </div>
  </footer>
);

const App = () => (
  <div className="flex h-screen flex-col overflow-hidden bg-[#f2f2f2] font-[Inter,Roboto,sans-serif] leading-none">
    <TitleBar />
    <TabRow />
    <Ribbon />
    <div className="flex min-h-0 flex-1">
      <Workspace />
      <FormatPanel />
    </div>
    <StatusBar />
  </div>
);

export default App;
